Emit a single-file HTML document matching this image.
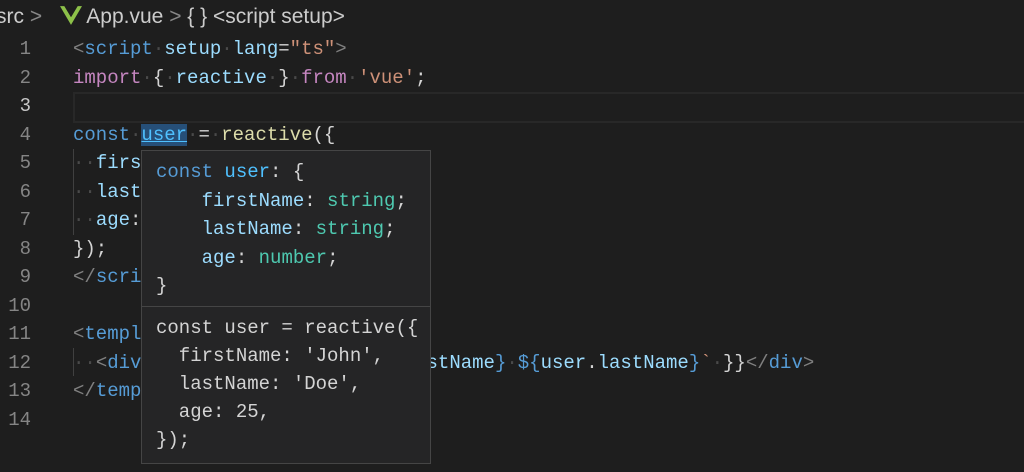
<!DOCTYPE html>
<html><head><meta charset="utf-8"><style>
body{margin:0;width:1024px;height:472px;background:#1e1e1e;overflow:hidden;position:relative;font-family:"Liberation Mono",monospace;font-size:19px;}
.bc{position:absolute;top:5px;left:-4px;font-family:"Liberation Sans",sans-serif;font-size:21px;color:#cccccc;white-space:pre;}
.ln{position:absolute;left:0;width:31px;text-align:right;color:#858585;height:28.5px;line-height:28.5px;}
.cl{position:absolute;left:73px;white-space:pre;color:#d4d4d4;height:28.5px;line-height:28.5px;}
.t{color:#569cd6}.a{color:#9cdcfe}.s{color:#ce9178}.k{color:#c586c0}.f{color:#dcdcaa}.g{color:#808080}.ty{color:#4ec9b0}.d{color:#4a4a4a}
.cur{position:absolute;left:73px;right:0;top:92px;height:27px;border:2px solid #282828;border-right:none;}
.hv{position:absolute;left:141px;top:150px;width:288px;height:312px;background:#252526;border:1px solid #454545;}
.hv .cl{left:14px}
.sep{position:absolute;left:0;right:0;top:155px;height:1px;background:#454545;}
</style></head><body>
<div class="bc">src <span style="color:#888">&gt;</span>   <svg width="22" height="19" viewBox="0 0 20 17" style="vertical-align:-2px"><path d="M0 0h4l6 10 6-10h4L10 17z" fill="#8dc149"/><path d="M4 0h3.5l2.5 4.3L12.5 0H16l-6 10z" fill="#1e1e1e"/></svg> App.vue <span style="color:#888">&gt;</span> { } &lt;script setup&gt;</div>
<div class="cur"></div>
<div style="position:absolute;left:73px;top:149px;width:1px;height:86px;background:#404040"></div>
<div style="position:absolute;left:73px;top:348px;width:1px;height:28px;background:#404040"></div>
<div class="ln" style="top:35px">1</div><div class="ln" style="top:63.5px">2</div><div class="ln" style="top:92px;color:#c6c6c6">3</div><div class="ln" style="top:120.5px">4</div><div class="ln" style="top:149px">5</div><div class="ln" style="top:177.5px">6</div><div class="ln" style="top:206px">7</div><div class="ln" style="top:234.5px">8</div><div class="ln" style="top:263px">9</div><div class="ln" style="top:291.5px">10</div><div class="ln" style="top:320px">11</div><div class="ln" style="top:348.5px">12</div><div class="ln" style="top:377px">13</div><div class="ln" style="top:405.5px">14</div>
<div class="cl" style="top:35px"><span class="g">&lt;</span><span class="t">script</span><span class="d">·</span><span class="a">setup</span><span class="d">·</span><span class="a">lang</span>=<span class="s">"ts"</span><span class="g">&gt;</span></div>
<div class="cl" style="top:63.5px"><span class="k">import</span><span class="d">·</span>{<span class="d">·</span><span class="a">reactive</span><span class="d">·</span>}<span class="d">·</span><span class="k">from</span><span class="d">·</span><span class="s">'vue'</span>;</div>
<div class="cl" style="top:120.5px"><span class="t">const</span><span class="d">·</span><span class="a" style="color:#4fc1ff;text-decoration:underline;background:#264f78">user</span><span class="d">·</span>=<span class="d">·</span><span class="f">reactive</span>({</div>
<div class="cl" style="top:149px"><span class="d">··</span><span class="a">firstName</span>: <span class="s">'John'</span>,</div>
<div class="cl" style="top:177.5px"><span class="d">··</span><span class="a">lastName</span>: <span class="s">'Doe'</span>,</div>
<div class="cl" style="top:206px"><span class="d">··</span><span class="a">age</span>: 25,</div>
<div class="cl" style="top:234.5px">});</div>
<div class="cl" style="top:263px"><span class="g">&lt;/</span><span class="t">script</span><span class="g">&gt;</span></div>
<div class="cl" style="top:320px"><span class="g">&lt;</span><span class="t">template</span><span class="g">&gt;</span></div>
<div class="cl" style="top:348.5px"><span class="d">··</span><span class="g">&lt;</span><span class="t">div</span><span class="g">&gt;</span>{{<span class="d">·</span><span class="s">`</span><span class="s">Full name:</span><span class="t">${</span><span class="a">user</span>.<span class="a">firstName</span><span class="t">}</span><span class="d">·</span><span class="t">${</span><span class="a">user</span>.<span class="a">lastName</span><span class="t">}</span><span class="s">`</span><span class="d">·</span>}}<span class="g">&lt;/</span><span class="t">div</span><span class="g">&gt;</span></div>
<div class="cl" style="top:377px"><span class="g">&lt;/</span><span class="t">template</span><span class="g">&gt;</span></div>
<div class="hv">
<div class="cl" style="top:7px"><span class="t">const</span> <span class="a" style="color:#4fc1ff">user</span>: {</div>
<div class="cl" style="top:35.5px">    <span class="a">firstName</span>: <span class="ty">string</span>;</div>
<div class="cl" style="top:64px">    <span class="a">lastName</span>: <span class="ty">string</span>;</div>
<div class="cl" style="top:92.5px">    <span class="a">age</span>: <span class="ty">number</span>;</div>
<div class="cl" style="top:121px">}</div>
<div class="sep"></div>
<div class="cl" style="top:163px">const user = reactive({</div>
<div class="cl" style="top:191px">  firstName: 'John',</div>
<div class="cl" style="top:219px">  lastName: 'Doe',</div>
<div class="cl" style="top:247px">  age: 25,</div>
<div class="cl" style="top:275px">});</div>
</div>
</body></html>
